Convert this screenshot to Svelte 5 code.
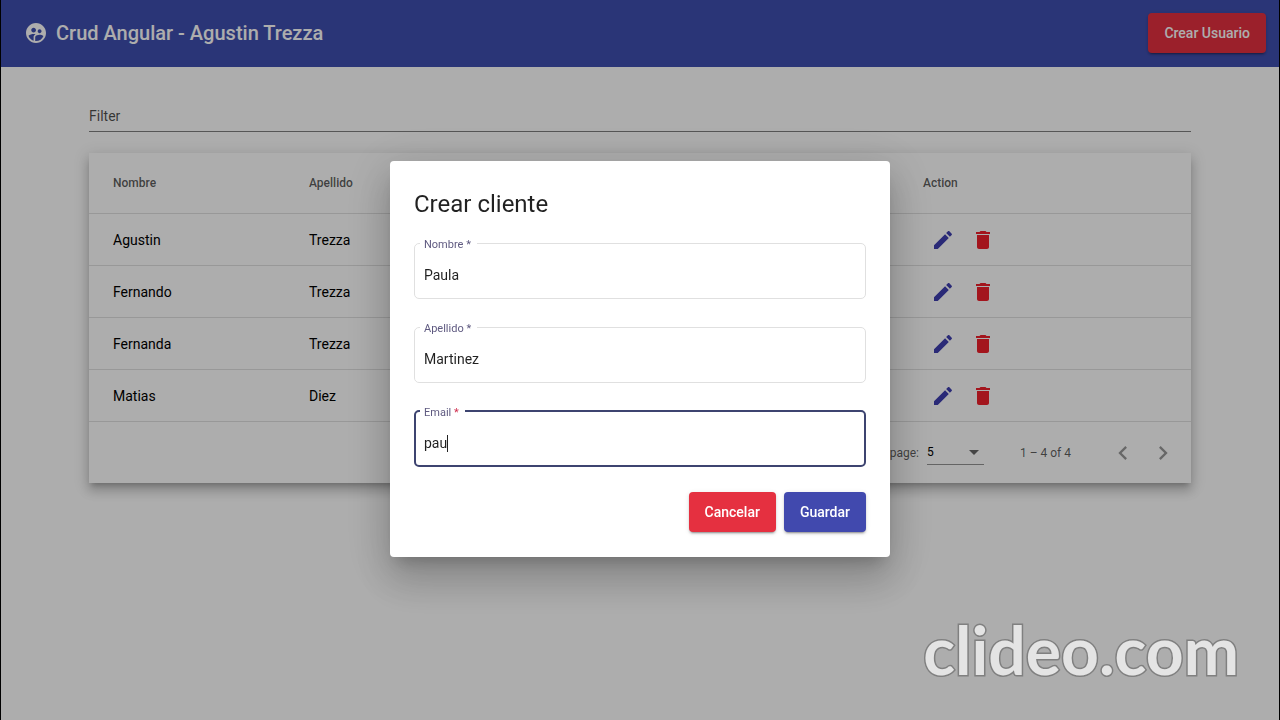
<script lang="ts">
  type Client = { nombre: string; apellido: string; email: string };

  let clients: Client[] = $state([
    { nombre: 'Agustin', apellido: 'Trezza', email: 'agustin@gmail.com' },
    { nombre: 'Fernando', apellido: 'Trezza', email: 'fernando@gmail.com' },
    { nombre: 'Fernanda', apellido: 'Trezza', email: 'fernanda@gmail.com' },
    { nombre: 'Matias', apellido: 'Diez', email: 'matias@gmail.com' },
  ]);

  let filter = $state('');
  let pageSize = $state('5');
  let dialogOpen = $state(true);
  let fields = $state([
    { id: 'nombre', label: 'Nombre', value: 'Paula' },
    { id: 'apellido', label: 'Apellido', value: 'Martinez' },
    { id: 'email', label: 'Email', value: 'pau' },
  ]);
  let active = $state('email');

  let rows = $derived(
    clients.filter((c) => `${c.nombre} ${c.apellido} ${c.email}`.toLowerCase().includes(filter.toLowerCase()))
  );

  function remove(client: Client) {
    clients = clients.filter((c) => c.email !== client.email);
  }

  function save(e: SubmitEvent) {
    e.preventDefault();
    const [nombre, apellido, email] = fields.map((f) => f.value);
    clients.push({ nombre, apellido, email });
    dialogOpen = false;
  }
</script>

<div class="page">
  <header class="toolbar">
    <svg class="icon" viewBox="0 0 24 24" aria-hidden="true">
      <path d="M12 2C6.48 2 2 6.48 2 12s4.48 10 10 10 10-4.48 10-10S17.52 2 12 2zm3.61 6.34c1.07 0 1.93.86 1.93 1.93 0 1.07-.86 1.93-1.93 1.93-1.07 0-1.93-.86-1.93-1.93-.01-1.07.86-1.93 1.93-1.93zm-6-1.58c1.3 0 2.36 1.06 2.36 2.36 0 1.3-1.06 2.36-2.36 2.36s-2.36-1.06-2.36-2.36c0-1.31 1.05-2.36 2.36-2.36zm0 9.13v3.75c-2.4-.75-4.3-2.6-5.14-4.96 1.05-1.12 3.67-1.69 5.14-1.69.53 0 1.2.08 1.9.22-1.64.87-1.9 2.02-1.9 2.68zM12 20c-.27 0-.53-.01-.79-.04v-4.07c0-1.42 2.94-2.13 4.4-2.13 1.07 0 2.92.39 3.84 1.15C18.28 17.88 15.39 20 12 20z" />
    </svg>
    <h1>Crud Angular - Agustin Trezza</h1>
    <button class="btn warn" onclick={() => (dialogOpen = true)}>Crear Usuario</button>
  </header>

  <main>
    <input class="filter" type="text" placeholder="Filter" aria-label="Filter" bind:value={filter} />

    <div class="card">
      <table>
        <thead>
          <tr>
            <th class="name">Nombre</th>
            <th class="surname">Apellido</th>
            <th class="email">Email</th>
            <th>Action</th>
          </tr>
        </thead>
        <tbody>
          {#each rows as client (client.email)}
            <tr>
              <td>{client.nombre}</td>
              <td>{client.apellido}</td>
              <td>{client.email}</td>
              <td>
                <div class="actions">
                  <button class="icon-btn edit" aria-label="Editar">
                    <svg class="icon" viewBox="0 0 24 24">
                      <path d="M3 17.25V21h3.75L17.81 9.94l-3.75-3.75L3 17.25zM20.71 7.04c.39-.39.39-1.02 0-1.41l-2.34-2.34c-.39-.39-1.02-.39-1.41 0l-1.83 1.83 3.75 3.75 1.83-1.83z" />
                    </svg>
                  </button>
                  <button class="icon-btn delete" aria-label="Eliminar" onclick={() => remove(client)}>
                    <svg class="icon" viewBox="0 0 24 24">
                      <path d="M6 19c0 1.1.9 2 2 2h8c1.1 0 2-.9 2-2V7H6v12zM19 4h-3.5l-1-1h-5l-1 1H5v2h14V4z" />
                    </svg>
                  </button>
                </div>
              </td>
            </tr>
          {/each}
        </tbody>
      </table>

      <div class="paginator">
        <label for="page-size">Items per page:</label>
        <div class="select">
          <select id="page-size" bind:value={pageSize}>
            <option>5</option>
            <option>10</option>
            <option>25</option>
          </select>
          <svg viewBox="0 0 10 5" aria-hidden="true"><path d="M0 0h10L5 5z" /></svg>
        </div>
        <span class="range">1 – {rows.length} of {rows.length}</span>
        <button class="icon-btn" aria-label="Previous page">
          <svg class="chevron" viewBox="0 0 24 24"><path d="M15.41 7.41L14 6l-6 6 6 6 1.41-1.41L10.83 12z" /></svg>
        </button>
        <button class="icon-btn" aria-label="Next page">
          <svg class="chevron" viewBox="0 0 24 24"><path d="M10 6L8.59 7.41 13.17 12l-4.58 4.59L10 18l6-6z" /></svg>
        </button>
      </div>
    </div>
  </main>
</div>

{#if dialogOpen}
  <div class="backdrop">
    <div class="dialog" role="dialog" aria-modal="true" aria-labelledby="dialog-title">
      <h2 id="dialog-title">Crear cliente</h2>
      <form onsubmit={save}>
        {#each fields as field (field.id)}
          <fieldset class:focused={active === field.id}>
            <legend><label for={field.id}>{field.label} <span class="required">*</span></label></legend>
            <div class="control">
              <input id={field.id} type="text" required autocomplete="off" bind:value={field.value} onfocus={() => (active = field.id)} />
              {#if active === field.id}
                <span class="caret" aria-hidden="true">{field.value}</span>
              {/if}
            </div>
          </fieldset>
        {/each}
        <div class="buttons">
          <button class="btn warn" type="button" onclick={() => (dialogOpen = false)}>Cancelar</button>
          <button class="btn primary" type="submit">Guardar</button>
        </div>
      </form>
    </div>
  </div>
{/if}

<div class="watermark">clideo.com</div>

<style>
  :global(body) {
    background: #fff;
    font-family: Roboto, 'Liberation Sans', sans-serif;
    color: rgba(0, 0, 0, 0.87);
  }

  .page,
  .backdrop {
    box-sizing: border-box;
    min-height: 100vh;
    border: solid #000;
    border-width: 0 1px;
  }

  button,
  input,
  select {
    font-family: inherit;
    color: inherit;
  }

  .icon {
    width: 24px;
    height: 24px;
    fill: currentColor;
    flex-shrink: 0;
  }

  .toolbar {
    display: flex;
    align-items: center;
    gap: 8px;
    padding: 13px 13px 14px 23px;
    background: #3f4fb0;
    color: #fff;
  }

  h1 {
    flex: 1;
    margin: 0;
    font-size: 20px;
    line-height: 24px;
    font-weight: 500;
  }

  .btn {
    height: 40px;
    padding: 0 16px;
    border: none;
    border-radius: 4px;
    color: #fff;
    font-size: 14px;
    font-weight: 500;
    cursor: pointer;
    box-shadow: 0 3px 1px -2px rgba(0, 0, 0, 0.2), 0 2px 2px rgba(0, 0, 0, 0.14), 0 1px 5px rgba(0, 0, 0, 0.12);
  }

  .btn.warn {
    background: #e53040;
  }

  .btn.primary {
    background: #4149ae;
  }

  main {
    max-width: 1102px;
    margin: 0 auto;
    padding: 34px 24px;
  }

  .filter {
    display: block;
    box-sizing: border-box;
    width: 100%;
    height: 31px;
    margin-bottom: 21px;
    padding: 0;
    border: none;
    border-bottom: 1px solid rgba(0, 0, 0, 0.5);
    border-radius: 0;
    outline: none;
    background: none;
    font-size: 14px;
  }

  .filter::placeholder {
    color: rgba(0, 0, 0, 0.7);
    opacity: 1;
  }

  .card {
    background: #fff;
    box-shadow: 0 5px 5px -3px rgba(0, 0, 0, 0.2), 0 8px 10px 1px rgba(0, 0, 0, 0.14), 0 3px 14px 2px rgba(0, 0, 0, 0.12);
  }

  table {
    width: 100%;
    table-layout: fixed;
    border-collapse: collapse;
  }

  th,
  td {
    padding: 0;
    border-bottom: 1px solid rgba(0, 0, 0, 0.12);
    text-align: left;
    font-size: 14px;
  }

  th:first-child,
  td:first-child {
    padding-left: 24px;
  }

  th {
    height: 60px;
    color: rgba(0, 0, 0, 0.65);
    font-size: 12px;
    font-weight: 500;
  }

  td {
    height: 51px;
    color: #000;
  }

  .name {
    width: 196px;
  }

  .surname,
  .email {
    width: 307px;
  }

  .actions {
    display: flex;
  }

  .icon-btn {
    display: flex;
    align-items: center;
    justify-content: center;
    width: 40px;
    height: 40px;
    padding: 0;
    border: none;
    background: none;
    cursor: pointer;
  }

  .edit {
    color: #3f3fb0;
  }

  .delete {
    color: #f0202c;
  }

  .paginator {
    display: flex;
    align-items: center;
    justify-content: flex-end;
    height: 61px;
    padding-right: 8px;
    color: rgba(0, 0, 0, 0.65);
    font-size: 12px;
  }

  .select {
    position: relative;
    width: 57px;
    margin: 0 36px 0 8px;
    border-bottom: 1px solid rgba(0, 0, 0, 0.42);
  }

  .select select {
    display: block;
    width: 100%;
    height: 24px;
    padding: 0;
    border: none;
    outline: none;
    appearance: none;
    background: none;
    color: #000;
    font-size: 12px;
  }

  .select svg {
    position: absolute;
    top: 10px;
    right: 5px;
    width: 10px;
    height: 5px;
    fill: rgba(0, 0, 0, 0.6);
    pointer-events: none;
  }

  .range {
    margin-right: 32px;
  }

  .chevron {
    width: 28px;
    height: 28px;
    fill: rgba(0, 0, 0, 0.4);
  }

  .backdrop {
    position: fixed;
    inset: 0;
    display: flex;
    align-items: center;
    justify-content: center;
    padding-bottom: 2px;
    background: rgba(0, 0, 0, 0.32);
  }

  .dialog {
    box-sizing: border-box;
    width: 500px;
    max-width: 80vw;
    padding: 24px 24px 25px;
    border-radius: 4px;
    background: #fff;
    box-shadow: 0 11px 15px -7px rgba(0, 0, 0, 0.2), 0 24px 38px 3px rgba(0, 0, 0, 0.14), 0 9px 46px 8px rgba(0, 0, 0, 0.12);
  }

  h2 {
    margin: 3px 0 15px;
    font-size: 24px;
    line-height: 32px;
    font-weight: 400;
  }

  form {
    display: flex;
    flex-direction: column;
    gap: 20px;
  }

  fieldset {
    box-sizing: border-box;
    height: 64px;
    margin: 0;
    padding: 0 5px;
    border: 1px solid #e0e0e0;
    border-radius: 5px;
  }

  fieldset.focused {
    padding: 0 4px;
    border: 2px solid #3d4470;
  }

  legend {
    padding: 4px 6px 0 4px;
    color: #5f5a80;
    font-size: 11px;
    line-height: 12px;
  }

  .focused .required {
    color: #d03050;
  }

  .control {
    position: relative;
    padding: 12px 4px 0;
    font-size: 14px;
  }

  .control input {
    display: block;
    box-sizing: border-box;
    width: 100%;
    height: 24px;
    padding: 0;
    border: none;
    outline: none;
    background: none;
    font-size: 14px;
  }

  .caret {
    position: absolute;
    top: 16px;
    left: 4px;
    height: 17px;
    border-right: 1px solid #222;
    color: transparent;
    pointer-events: none;
  }

  .buttons {
    display: flex;
    justify-content: flex-end;
    gap: 8px;
    padding-top: 5px;
  }

  .watermark {
    position: fixed;
    right: 41px;
    bottom: 30px;
    color: #e4e4e4;
    font-family: Lato, sans-serif;
    font-size: 66px;
    line-height: 80px;
    font-weight: 700;
    -webkit-text-stroke: 3px #808080;
    paint-order: stroke;
    pointer-events: none;
  }
</style>
